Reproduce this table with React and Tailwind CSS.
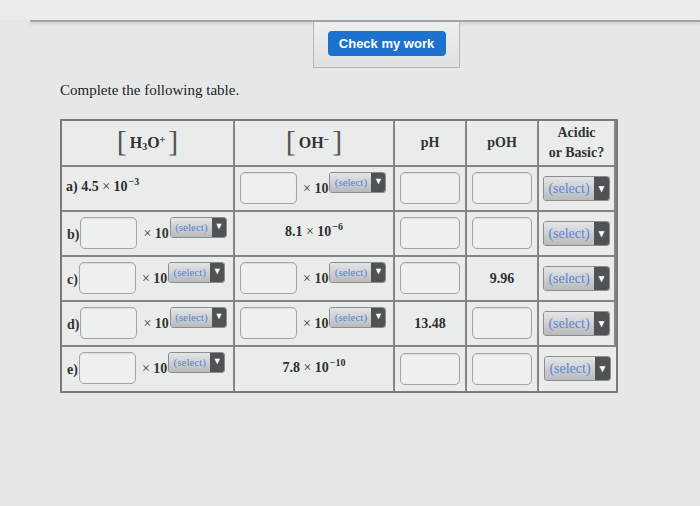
import React from "react";

const serif = "font-['Liberation_Serif','Times_New_Roman',serif]";

const Select = ({ big }) => (
  <div
    className={`flex items-stretch rounded-[3px] border border-[#8d8d8d] overflow-hidden ${
      big ? "w-[67px] h-[25px]" : "w-[57px] h-[21px]"
    }`}
  >
    <div
      className={`flex-1 flex items-center justify-center bg-gradient-to-b from-[#e4e5e7] to-[#b9babd] text-[#5b86d6] ${serif} ${
        big ? "text-[14px]" : "text-[11px]"
      }`}
    >
      (select)
    </div>
    <div
      className={`flex items-center justify-center bg-[#505254] text-white ${
        big ? "w-[15px] text-[10px]" : "w-[14px] text-[9px]"
      }`}
    >
      ▼
    </div>
  </div>
);

const Input = ({ w = "w-[57px]" }) => (
  <div className={`${w} h-[32px] rounded-[5px] border border-[#a4a4a4] bg-[#eeefef] shadow-[inset_0_1px_1px_rgba(0,0,0,0.08)]`} />
);

const Sci = ({ label }) => (
  <div className="flex items-start h-full pt-[5px] pl-[5px]">
    {label && <span className="mt-[7px] mr-[1px] text-[14px] font-bold text-[#333]">{label}</span>}
    <Input />
    <span className="mt-[6px] ml-[6px] text-[14px] font-bold text-[#333]">
      <span className="font-normal">×</span> 10
    </span>
    <div className="ml-[1px]">
      <Select />
    </div>
  </div>
);

const Val = ({ base, exp }) => (
  <span className="text-[14px] font-bold text-[#2e2e2e]">
    {base} <span className="font-normal">×</span> 10
    <sup className="text-[10px] -top-[6px] ml-[1px]">{exp}</sup>
  </span>
);

const Cell = ({ children, center, last }) => (
  <div
    className={`h-full border-r-2 border-b-2 border-[#858585] ${
      center ? "flex items-center justify-center" : ""
    } ${last ? "border-r-0" : ""}`}
  >
    {children}
  </div>
);

const InputCell = () => (
  <Cell center>
    <Input w="w-[60px]" />
  </Cell>
);

const AcidCell = () => (
  <Cell center last>
    <Select big />
  </Cell>
);

const Num = ({ v }) => (
  <Cell center>
    <span className="text-[14px] font-bold text-[#2e2e2e]">{v}</span>
  </Cell>
);

export default function App() {
  return (
    <div className={`w-[700px] h-[506px] overflow-hidden bg-[#e6e8e8] ${serif}`}>
      <div className="h-[20px] bg-[#eaeced]" />
      <div className="ml-[30px] h-[2px] bg-[#a2a4a5] shadow-[0_2px_3px_rgba(0,0,0,0.12)]" />
      <div className="ml-[313px] w-[147px] h-[46px] border-x border-b border-[#b5b7b8] bg-gradient-to-b from-[#eef0f0] to-[#dfe1e2] flex items-center justify-center">
        <div className="w-[118px] h-[25px] mt-[-2px] rounded-[4px] bg-[#1c72cc] flex items-center justify-center text-white text-[13px] font-bold font-['Liberation_Sans',Arial,sans-serif]">
          Check my work
        </div>
      </div>
      <p className="mt-[11px] ml-[60px] text-[15px] text-[#222]">Complete the following table.</p>
      <div className="mt-[17px] ml-[60px] w-[558px] border-2 border-[#7a7a7a] bg-[#eaecec] grid grid-cols-[173px_160px_72px_72px_77px] grid-rows-[46px_45px_45px_45px_45px_44px]">
        <Cell center>
          <span className="flex items-center text-[#333]">
            <span className="text-[30px] font-light leading-none mr-[3px] pb-[3px] text-[#555]">[</span>
            <span className="text-[16px] font-bold">
              H<sub className="text-[10px]">3</sub>O<sup className="text-[10px]">+</sup>
            </span>
            <span className="text-[30px] font-light leading-none ml-[3px] pb-[3px] text-[#555]">]</span>
          </span>
        </Cell>
        <Cell center>
          <span className="flex items-center text-[#333]">
            <span className="text-[30px] leading-none mr-[3px] pb-[3px] text-[#555]">[</span>
            <span className="text-[16px] font-bold">
              OH<sup className="text-[10px]">−</sup>
            </span>
            <span className="text-[30px] leading-none ml-[3px] pb-[3px] text-[#555]">]</span>
          </span>
        </Cell>
        <Cell center>
          <span className="text-[14px] font-bold text-[#333]">pH</span>
        </Cell>
        <Cell center>
          <span className="text-[14px] font-bold text-[#333]">pOH</span>
        </Cell>
        <Cell center last>
          <span className="text-[14px] font-bold text-[#333] text-center leading-[20px]">
            Acidic
            <br />
            or Basic?
          </span>
        </Cell>

        <Cell>
          <div className="h-full flex items-center pl-[4px] pb-[4px]">
            <Val base="a) 4.5" exp="−3" />
          </div>
        </Cell>
        <Cell>
          <Sci />
        </Cell>
        <InputCell />
        <InputCell />
        <AcidCell />

        <Cell>
          <Sci label="b)" />
        </Cell>
        <Cell center>
          <span className="pb-[4px]">
            <Val base="8.1" exp="−6" />
          </span>
        </Cell>
        <InputCell />
        <InputCell />
        <AcidCell />

        <Cell>
          <Sci label="c)" />
        </Cell>
        <Cell>
          <Sci />
        </Cell>
        <InputCell />
        <Num v="9.96" />
        <AcidCell />

        <Cell>
          <Sci label="d)" />
        </Cell>
        <Cell>
          <Sci />
        </Cell>
        <Num v="13.48" />
        <InputCell />
        <AcidCell />

        <div className="h-full border-r-2 border-[#858585]">
          <Sci label="e)" />
        </div>
        <div className="h-full border-r-2 border-[#858585] flex items-center justify-center">
          <span className="pb-[4px]">
            <Val base="7.8" exp="−10" />
          </span>
        </div>
        <div className="h-full border-r-2 border-[#858585] flex items-center justify-center">
          <Input w="w-[60px]" />
        </div>
        <div className="h-full border-r-2 border-[#858585] flex items-center justify-center">
          <Input w="w-[60px]" />
        </div>
        <div className="h-full flex items-center justify-center">
          <Select big />
        </div>
      </div>
    </div>
  );
}
